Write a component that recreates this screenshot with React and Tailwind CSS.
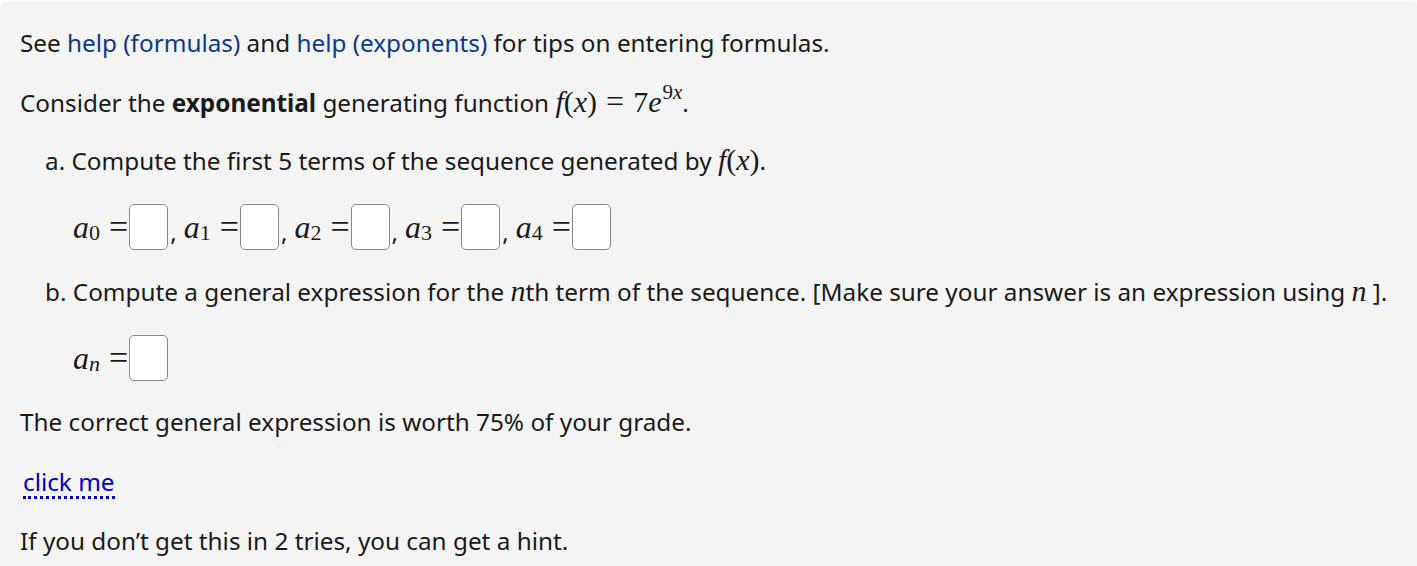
import React from 'react';

const mathFont = { fontFamily: '"Liberation Serif", "DejaVu Serif", serif' };

function I({ children }) {
  return <span className="italic">{children}</span>;
}

function M({ children }) {
  return (
    <span className="text-[30px] leading-none" style={mathFont}>
      {children}
    </span>
  );
}

function Blank() {
  return <span className="inline-block w-[39px] h-[46px] align-middle bg-white border border-[#8a8a8a] rounded-[5px]" />;
}

function Term({ sub, last, italicSub }) {
  return (
    <span className="inline-flex items-center">
      <span className="text-[32px] italic" style={mathFont}>a</span>
      <span className={`text-[22px] mt-[12px] mr-[9px] ${italicSub ? 'italic' : ''}`} style={mathFont}>{sub}</span>
      <span className="text-[34px] leading-[34px] mr-[1px]" style={mathFont}>=</span>
      <Blank />
      {!last && <span className="text-[#1a1a1a] mr-[7px] ml-[2px] mt-[10px]">,</span>}
    </span>
  );
}

export default function App() {
  return (
    <div className="bg-white pt-[4px] min-h-[566px]" style={{ fontFamily: '"Segoe UI", "Noto Sans", sans-serif' }}>
      <div className="bg-[#f4f4f4] rounded-tl-[6px] shadow-[0_-2px_4px_rgba(0,0,0,0.08)] text-[#1a1a1a] text-[24.3px] leading-[32px] pl-[20px] pt-[23px] pb-[10px] min-h-[562px]">
        <p>
          See <span className="text-[#0a3a8c]">help (formulas)</span> and{' '}
          <span className="text-[#0a3a8c]">help (exponents)</span> for tips on entering formulas.
        </p>
        <p className="mt-[26px] h-[32px]">
          Consider the <b className="font-bold">exponential</b> generating function{' '}
          <M>
            <I>f</I>(<I>x</I>)<span className="mx-[9px] text-[32px]">=</span>7<I>e</I>
            <sup className="text-[21px] -top-[13px] ml-[1px]">9<I>x</I></sup>
          </M>
          <span>.</span>
        </p>
        <div className="pl-[25px] mt-[28px]">
          <p className="h-[32px]">
            a. Compute the first 5 terms of the sequence generated by{' '}
            <M>
              <I>f</I>(<I>x</I>)
            </M>
            .
          </p>
          <div className="pl-[28px] mt-[27px] flex items-center">
            <Term sub="0" />
            <Term sub="1" />
            <Term sub="2" />
            <Term sub="3" />
            <Term sub="4" last />
          </div>
          <p className="mt-[26px] h-[32px]">
            b. Compute a general expression for the{' '}
            <M>
              <I>n</I>
            </M>
            th term of the sequence. [Make sure your answer is an expression using{' '}
            <M>
              <I>n</I>
            </M>{' '}
            ].
          </p>
          <div className="pl-[28px] mt-[27px] flex items-center">
            <Term sub="n" italicSub last />
          </div>
        </div>
        <p className="mt-[25px]">The correct general expression is worth 75% of your grade.</p>
        <p className="mt-[28px] pl-[3px]">
          <span className="text-[#0000c0] border-b-[3px] border-dotted border-[#0000c0] leading-[28px] inline-block">click me</span>
        </p>
        <p className="mt-[26px]">If you don’t get this in 2 tries, you can get a hint.</p>
      </div>
    </div>
  );
}
